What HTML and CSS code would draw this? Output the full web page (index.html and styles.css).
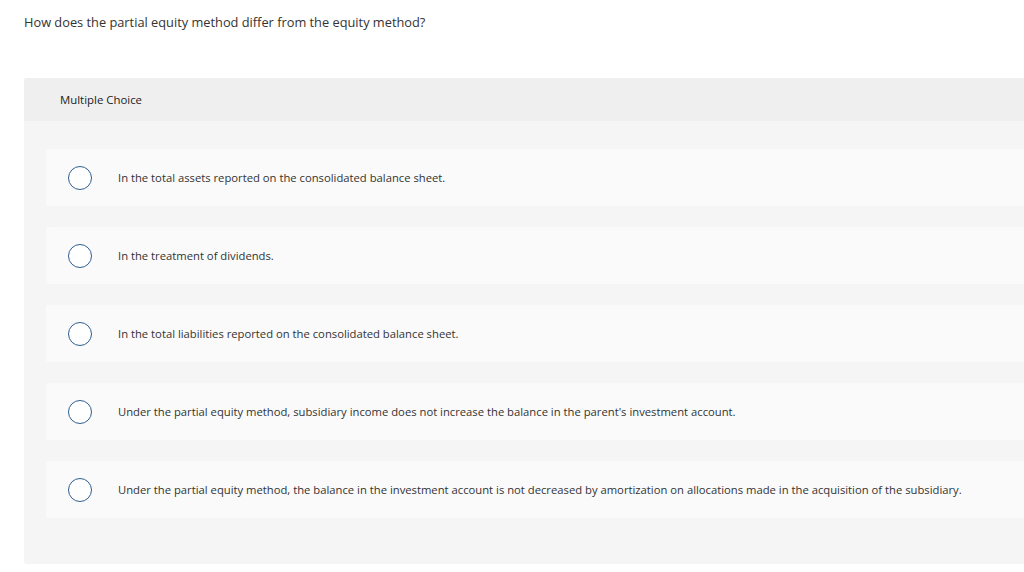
FILE: index.html
```html
<!DOCTYPE html>
<html>
<head>
<meta charset="utf-8">
<link rel="stylesheet" href="styles.css">
</head>
<body>
<div class="page">
  <p class="question">How does the partial equity method differ from the equity method?</p>
  <section class="panel">
    <div class="panel-head">Multiple Choice</div>
    <div class="options">
      <div class="option"><span class="radio"></span><span class="label">In the total assets reported on the consolidated balance sheet.</span></div>
      <div class="option"><span class="radio"></span><span class="label">In the treatment of dividends.</span></div>
      <div class="option"><span class="radio"></span><span class="label">In the total liabilities reported on the consolidated balance sheet.</span></div>
      <div class="option"><span class="radio"></span><span class="label">Under the partial equity method, subsidiary income does not increase the balance in the parent's investment account.</span></div>
      <div class="option"><span class="radio"></span><span class="label">Under the partial equity method, the balance in the investment account is not decreased by amortization on allocations made in the acquisition of the subsidiary.</span></div>
    </div>
  </section>
</div>
</body>
</html>
```
FILE: styles.css
```css
html, body {
  margin: 0;
  padding: 0;
  background: #ffffff;
}
body {
  font-family: "Open Sans", "Lato", sans-serif;
  color: #333333;
  overflow: hidden;
}
.page {
  width: 1024px;
  height: 572px;
  overflow: hidden;
}
.question {
  margin: 0;
  padding: 14px 0 0 24px;
  height: 78px;
  box-sizing: border-box;
  font-size: 12.8px;
  line-height: 17px;
  color: #333;
}
.panel {
  margin-left: 24px;
  width: 1010px;
  height: 486px;
  background: #f5f5f5;
  border-radius: 3px;
  overflow: hidden;
}
.panel-head {
  height: 43px;
  background: #efefef;
  padding-left: 36px;
  display: flex;
  align-items: center;
  font-size: 11.4px;
  color: #222;
}
.options {
  display: flex;
  flex-direction: column;
  gap: 21px;
  padding: 28px 0 0 22px;
}
.option {
  height: 57px;
  background: #fafafa;
  border-radius: 3px;
  display: flex;
  align-items: center;
  padding-left: 22px;
}
.radio {
  width: 22px;
  height: 22px;
  border: 1px solid #2f5e90;
  border-radius: 50%;
  background: #fff;
  flex: none;
}
.label {
  margin-left: 26px;
  font-size: 11.25px;
  color: #333;
}
```
